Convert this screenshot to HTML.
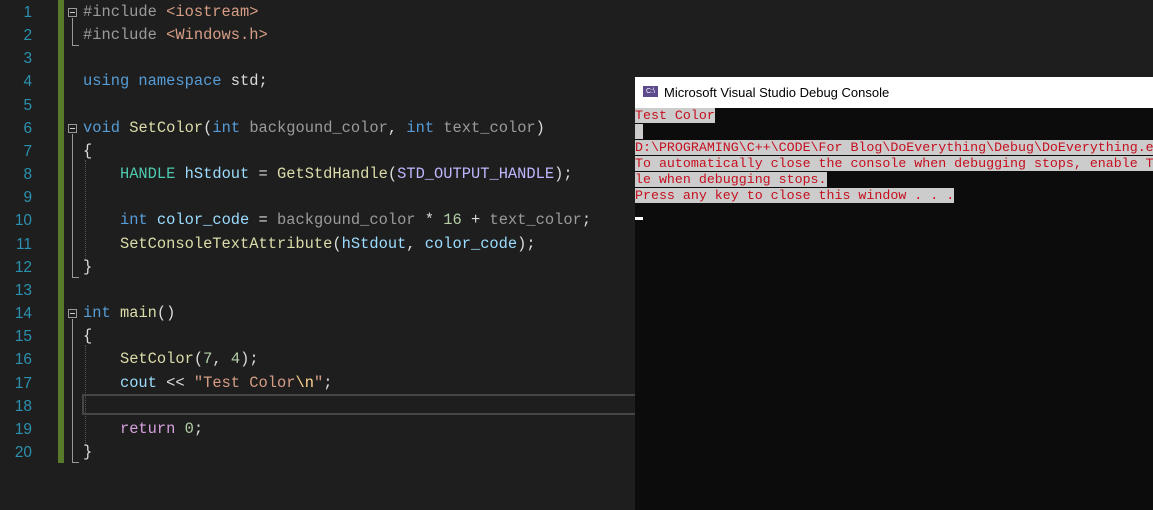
<!DOCTYPE html>
<html><head><meta charset="utf-8"><style>
body{margin:0;width:1153px;height:510px;background:#1e1e1e;overflow:hidden;position:relative;font-family:"Liberation Mono",monospace}
.ln{position:absolute;left:0;top:1px;width:32px;text-align:right;color:#2b91af;font-size:15.4px;line-height:23.15px;font-family:"Liberation Sans",sans-serif}
.code{position:absolute;left:83px;top:1px;color:#dcdcdc;font-size:15.4px;line-height:23.15px;white-space:pre}
.k{color:#569cd6}.f{color:#dcdcaa}.t{color:#4ec9b0}.v{color:#9cdcfe}.p{color:#9a9a9a}.s{color:#d69d85}.n{color:#b5cea8}.m{color:#beb7ff}.pp{color:#9b9b9b}.r{color:#d8a0df}.e{color:#ffd68f}
.bar{position:absolute;left:58px;top:0;width:6px;height:463px;background:#5a7a2b}
.box{position:absolute;width:9px;height:9px;border:1px solid #999;box-sizing:border-box}
.box:after{content:"";position:absolute;left:1px;top:3px;width:5px;height:1px;background:#ccc}
.cur{position:absolute;left:82px;top:394px;width:560px;height:21px;border:2px solid #464646;box-sizing:border-box}
.con{position:absolute;left:635px;top:77px;width:518px;height:433px;background:#0c0c0c}
.title{height:31px;background:#fff;font-family:"Liberation Sans",sans-serif;font-size:13px;color:#000;line-height:31px;padding-left:29px;position:relative}
.ic{position:absolute;left:8px;top:9px;width:15px;height:11px;background:#5c4a8c;color:#fff;font-size:7px;line-height:11px;text-align:center}
.ct{font-size:13.3px;line-height:16px;color:#c50f1f;white-space:pre}
.hl{background:#cccccc}
.g{position:absolute;border-left:1px dotted #555}
</style></head><body>
<div class="bar"></div>
<div class="ln">1<br>2<br>3<br>4<br>5<br>6<br>7<br>8<br>9<br>10<br>11<br>12<br>13<br>14<br>15<br>16<br>17<br>18<br>19<br>20</div>
<div class="box" style="left:68px;top:8px"></div>
<div class="box" style="left:68px;top:124px"></div>
<div class="box" style="left:68px;top:309px"></div>
<div style="position:absolute;left:72px;top:18px;width:6px;height:27px;border-left:1px solid #999;border-bottom:1px solid #999"></div>
<div style="position:absolute;left:72px;top:134px;width:6px;height:143px;border-left:1px solid #999;border-bottom:1px solid #999"></div>
<div style="position:absolute;left:72px;top:319px;width:6px;height:143px;border-left:1px solid #999;border-bottom:1px solid #999"></div>
<div class="g" style="left:85px;top:160px;height:100px"></div>
<div class="g" style="left:85px;top:345px;height:100px"></div>
<div class="cur"></div>
<div class="code"><span class="pp">#include </span><span class="s">&lt;iostream&gt;</span>
<span class="pp">#include </span><span class="s">&lt;Windows.h&gt;</span>

<span class="k">using namespace</span> std;

<span class="k">void</span> <span class="f">SetColor</span>(<span class="k">int</span> <span class="p">backgound_color</span>, <span class="k">int</span> <span class="p">text_color</span>)
{
    <span class="t">HANDLE</span> <span class="v">hStdout</span> = <span class="f">GetStdHandle</span>(<span class="m">STD_OUTPUT_HANDLE</span>);

    <span class="k">int</span> <span class="v">color_code</span> = <span class="p">backgound_color</span> * <span class="n">16</span> + <span class="p">text_color</span>;
    <span class="f">SetConsoleTextAttribute</span>(<span class="v">hStdout</span>, <span class="v">color_code</span>);
}

<span class="k">int</span> <span class="f">main</span>()
{
    <span class="f">SetColor</span>(<span class="n">7</span>, <span class="n">4</span>);
    <span class="v">cout</span> &lt;&lt; <span class="s">"Test Color</span><span class="e">\n</span><span class="s">"</span>;

    <span class="r">return</span> <span class="n">0</span>;
}</div>
<div class="con">
<div class="title"><div class="ic">C:\</div>Microsoft Visual Studio Debug Console</div>
<div class="ct"><span class="hl">Test Color</span>
<span class="hl"> </span>
<span class="hl">D:\PROGRAMING\C++\CODE\For Blog\DoEverything\Debug\DoEverything.exe</span>
<span class="hl">To automatically close the console when debugging stops, enable Tools</span>
<span class="hl">le when debugging stops.</span>
<span class="hl">Press any key to close this window . . .</span>

<span style="display:inline-block;width:8px;height:3px;background:#fff;vertical-align:top;margin-top:-3px"></span></div>
</div>
</body></html>
